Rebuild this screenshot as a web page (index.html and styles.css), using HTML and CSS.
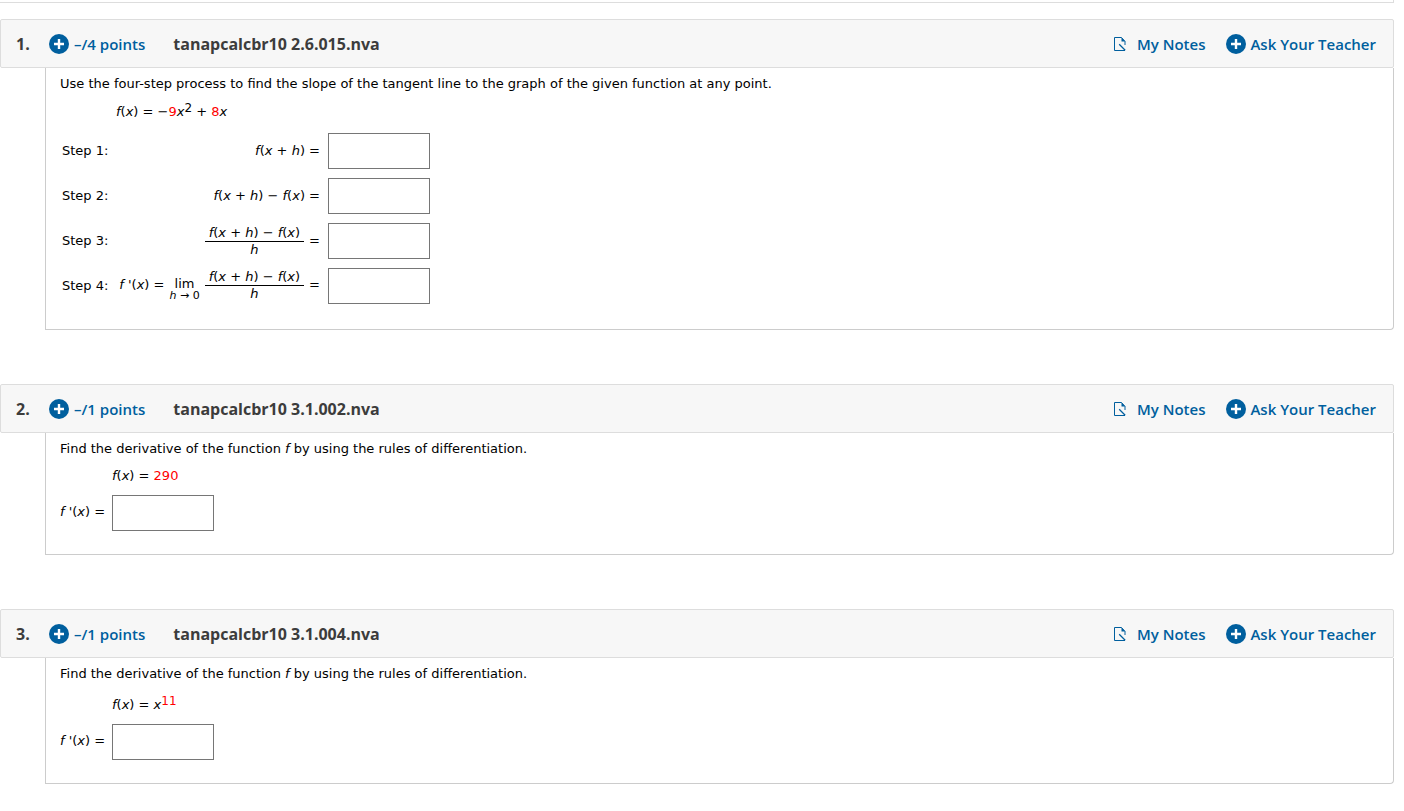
FILE: index.html
```html
<!DOCTYPE html>
<html lang="en">
<head>
<meta charset="utf-8">
<title>Assignment</title>
<link rel="stylesheet" href="styles.css">
</head>
<body>
<svg width="0" height="0" class="sprite" aria-hidden="true">
  <symbol id="plus" viewBox="0 0 20 20"><circle cx="10" cy="10" r="10" fill="#005f9e"/><path d="M10 5v10M5 10h10" stroke="#fff" stroke-width="2.4" fill="none"/></symbol>
  <symbol id="note" viewBox="0 0 12 14"><path d="M11 8V4.500L7.500.5H.5v13H11" fill="none" stroke="#005f9e" stroke-width="1"/><path d="M7.500.5L11.500 4.500H7.500z" fill="#005f9e"/><path d="M5.200 7.200l6 6" stroke="#005f9e" stroke-width="1.300" fill="none"/></symbol>
</svg>
<div class="previous"></div>
<main>
  <section class="question">
    <header class="bar">
      <span class="number">1.</span>
      <a class="link points" href="#"><svg class="plus"><use href="#plus"/></svg>–/4 points</a>
      <h2 class="name">tanapcalcbr10 2.6.015.nva</h2>
      <a class="link notes" href="#"><svg class="note"><use href="#note"/></svg>My Notes</a>
      <a class="link ask" href="#"><svg class="plus"><use href="#plus"/></svg>Ask Your Teacher</a>
    </header>
    <div class="content">
      <p class="prompt">Use the four-step process to find the slope of the tangent line to the graph of the given function at any point.</p>
      <p class="formula first"><i>f</i>(<i>x</i>) = −<span class="value">9</span><i>x</i><sup>2</sup> + <span class="value">8</span><i>x</i></p>
      <div class="steps">
        <div class="step"><span>Step 1:</span><label class="expr" for="s1"><span><i>f</i>(<i>x</i> + <i>h</i>) =</span></label><input class="answer" id="s1" type="text"></div>
        <div class="step"><span>Step 2:</span><label class="expr" for="s2"><span><i>f</i>(<i>x</i> + <i>h</i>) − <i>f</i>(<i>x</i>) =</span></label><input class="answer" id="s2" type="text"></div>
        <div class="step"><span>Step 3:</span><label class="expr" for="s3"><span class="fraction"><span class="top"><i>f</i>(<i>x</i> + <i>h</i>) − <i>f</i>(<i>x</i>)</span><i>h</i></span><span>=</span></label><input class="answer" id="s3" type="text"></div>
        <div class="step"><span>Step 4:</span><label class="expr limit-row" for="s4"><span><i>f</i> '(<i>x</i>) =</span><span class="limit"><span>lim</span><small><i>h</i> → 0</small></span><span class="fraction"><span class="top"><i>f</i>(<i>x</i> + <i>h</i>) − <i>f</i>(<i>x</i>)</span><i>h</i></span><span>=</span></label><input class="answer" id="s4" type="text"></div>
      </div>
    </div>
  </section>
  <section class="question">
    <header class="bar">
      <span class="number">2.</span>
      <a class="link points" href="#"><svg class="plus"><use href="#plus"/></svg>–/1 points</a>
      <h2 class="name">tanapcalcbr10 3.1.002.nva</h2>
      <a class="link notes" href="#"><svg class="note"><use href="#note"/></svg>My Notes</a>
      <a class="link ask" href="#"><svg class="plus"><use href="#plus"/></svg>Ask Your Teacher</a>
    </header>
    <div class="content">
      <p class="prompt">Find the derivative of the function <i>f</i> by using the rules of differentiation.</p>
      <p class="formula"><i>f</i>(<i>x</i>) = <span class="value">290</span></p>
      <div class="derivative"><label for="d2"><i>f</i> '(<i>x</i>) =</label><input class="answer" id="d2" type="text"></div>
    </div>
  </section>
  <section class="question">
    <header class="bar">
      <span class="number">3.</span>
      <a class="link points" href="#"><svg class="plus"><use href="#plus"/></svg>–/1 points</a>
      <h2 class="name">tanapcalcbr10 3.1.004.nva</h2>
      <a class="link notes" href="#"><svg class="note"><use href="#note"/></svg>My Notes</a>
      <a class="link ask" href="#"><svg class="plus"><use href="#plus"/></svg>Ask Your Teacher</a>
    </header>
    <div class="content">
      <p class="prompt">Find the derivative of the function <i>f</i> by using the rules of differentiation.</p>
      <p class="formula power"><i>f</i>(<i>x</i>) = <i>x</i><sup class="value">11</sup></p>
      <div class="derivative"><label for="d3"><i>f</i> '(<i>x</i>) =</label><input class="answer" id="d3" type="text"></div>
    </div>
  </section>
</main>
</body>
</html>
```
FILE: styles.css
```css
* { box-sizing: border-box; }
body {
  margin: 0;
  padding-right: 10px;
  background: #fff;
  color: #000;
  font: 13px/16px Verdana, "DejaVu Sans", sans-serif;
}
.sprite { position: absolute; }
.previous {
  height: 3px;
  margin-bottom: 16px;
  border: solid #ddd;
  border-width: 0 1px 1px 0;
}
.question { margin-bottom: 54px; }
.bar {
  display: flex;
  align-items: center;
  height: 49px;
  padding: 0 17px 0 15px;
  border: 1px solid #ddd;
  border-radius: 2px;
  background: #f7f7f7;
  color: #3c3c3c;
  font: 600 15px/20px "Open Sans", sans-serif;
}
.number { width: 33px; font-size: 16px; font-weight: 700; }
.name { margin: 0 auto 0 28px; font-size: 16px; font-weight: 700; }
.link { display: flex; align-items: center; color: #005f9e; text-decoration: none; }
.plus { width: 20px; height: 20px; margin-right: 4px; }
.points .plus { margin-right: 5px; }
.note { width: 12px; height: 14px; margin-right: 11px; }
.ask { margin-left: 21px; }
.content {
  margin-left: 45px;
  padding: 8px 14px 23px;
  border: solid #ccc;
  border-width: 0 1px 1px;
  border-radius: 0 0 4px 0;
}
p { margin: 0; }
.formula { margin-top: 11px; padding-left: 52px; }
.first { margin-top: 12px; padding-left: 56px; }
.power { margin-top: 15px; }
sup { font-size: 12px; line-height: 0; vertical-align: 4px; }
.value { color: #f00; }
.steps { display: grid; gap: 9px; margin-top: 13px; padding: 0 0 2px 2px; }
.step { display: grid; grid-template-columns: 50px 204px 102px; column-gap: 4px; align-items: center; }
.step .answer { margin-left: 4px; }
.expr { display: flex; justify-content: flex-end; align-items: center; gap: 5px; }
.limit-row { padding-bottom: 2px; }
.answer { display: block; width: 102px; height: 36px; padding: 2px 6px; border: 1px solid #767676; background: #fff; font: inherit; }
.fraction { display: grid; justify-items: center; }
.top { padding: 0 4px; border-bottom: 1px solid #000; }
.limit { display: grid; justify-items: center; padding-top: 8px; line-height: 12px; }
small { font-size: 11px; line-height: 11px; }
.derivative { display: flex; align-items: center; gap: 7px; margin-top: 11px; }
.derivative label { padding-bottom: 3px; }
```
